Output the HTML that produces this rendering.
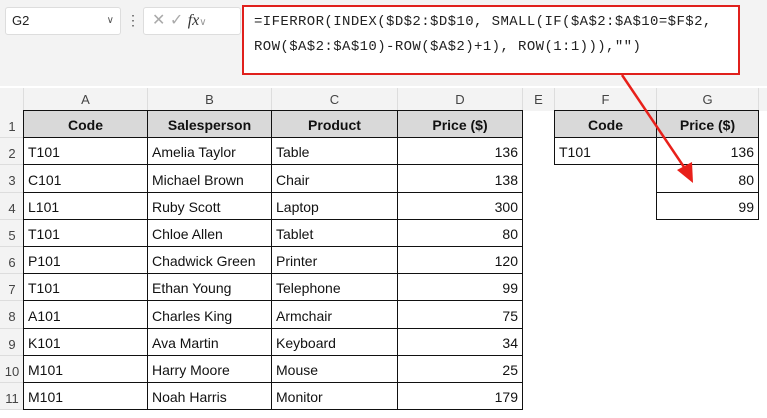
<!DOCTYPE html><html><head><style>
body{margin:0;width:767px;height:418px;overflow:hidden;background:#fff;font-family:"Liberation Sans",sans-serif;position:relative}
.top{position:absolute;left:0;top:0;width:767px;height:86px;background:#f3f3f3}
.nb{position:absolute;left:5px;top:7px;width:114px;height:26px;background:#fff;border:1px solid #ddd;border-radius:3px;font-size:13px;line-height:26px;text-indent:6px;color:#222}
.fx{position:absolute;left:143px;top:7px;width:96px;height:26px;background:#fff;border:1px solid #ddd;border-radius:3px;color:#aaa;font-size:16px;line-height:26px}
.fbox{position:absolute;left:242px;top:5px;border:2px solid #e0201c;background:#fff;font-family:"Liberation Mono",monospace;font-size:14px;line-height:25px;padding:3px 0 0 10px;box-sizing:border-box;width:498px;height:70px;color:#222;letter-spacing:0.4px;white-space:nowrap}
.ch{position:absolute;top:88px;height:23px;background:#f3f3f3;border-right:1px solid #ddd;box-sizing:border-box;text-align:center;font-size:13px;line-height:23px;color:#444}
.rh{position:absolute;left:0;width:24px;background:#f3f3f3;font-size:13px;color:#444;text-align:center;border-bottom:1px solid #ddd;box-sizing:border-box}
.c{position:absolute;box-sizing:border-box;border:1px solid #111;margin:-1px 0 0 -1px;font-size:14px;padding:0 4px;color:#111;white-space:nowrap}
.h{background:#d9d9d9;font-weight:bold;text-align:center}
.r{text-align:right}
</style></head><body>
<div class="top"></div>
<div class="nb">G2<span style="position:absolute;right:6px;color:#555;font-size:10px">&#8744;</span></div>
<div style="position:absolute;left:126px;top:12px;color:#555;font-size:14px">&#8942;</div>
<div class="fx"><span style="margin-left:8px">&#10005;</span> <span>&#10003;</span> <i style="font-family:'Liberation Serif',serif;color:#333">fx</i><span style="font-size:10px;color:#999">&#8744;</span></div>
<div class="fbox">=IFERROR(INDEX($D$2:$D$10, SMALL(IF($A$2:$A$10=$F$2,<br>ROW($A$2:$A$10)-ROW($A$2)+1), ROW(1:1))),"")</div>
<div id="g"></div>
<svg style="position:absolute;left:0;top:0" width="767" height="418"><line x1="622" y1="75" x2="686" y2="170" stroke="#e8201a" stroke-width="2.5"/><polygon points="693,183 677,170 692,162" fill="#e8201a"/></svg>
<script>
var xs=[24,148,272,398,523,555,657,759],L="ABCDEFG",h='';
for(var i=0;i<7;i++)h+='<div class="ch" style="left:'+xs[i]+'px;width:'+(xs[i+1]-xs[i])+'px">'+L[i]+'</div>';
h+='<div class="ch" style="left:0;width:24px"></div><div class="ch" style="left:759px;width:8px;border:0"></div>';
var t0=111,rh=27.2;
var d=[["Code","Salesperson","Product","Price ($)"],["T101","Amelia Taylor","Table",136],["C101","Michael Brown","Chair",138],["L101","Ruby Scott","Laptop",300],["T101","Chloe Allen","Tablet",80],["P101","Chadwick Green","Printer",120],["T101","Ethan Young","Telephone",99],["A101","Charles King","Armchair",75],["K101","Ava Martin","Keyboard",34],["M101","Harry Moore","Mouse",25],["M101","Noah Harris","Monitor",179]];
for(var r=0;r<11;r++){var y=Math.round(t0+r*rh),y2=Math.round(t0+(r+1)*rh),ht=y2-y;
h+='<div class="rh" style="top:'+y+'px;height:'+ht+'px;line-height:'+(ht+4)+'px">'+(r+1)+'</div>';
for(var c=0;c<4;c++){h+='<div class="c'+(r==0?' h':'')+(r>0&&c==3?' r':'')+'" style="left:'+xs[c]+'px;top:'+y+'px;width:'+(xs[c+1]-xs[c]+1)+'px;height:'+(ht+1)+'px;line-height:'+(ht+2)+'px">'+d[r][c]+'</div>';}
var f=null;if(r==0)f=[["Code",1],["Price ($)",1]];else if(r==1)f=[["T101",0],[136,0]];else if(r<4)f=[null,[r==2?80:99,0]];
if(f)for(var k=0;k<2;k++){if(!f[k])continue;var cc=5+k;h+='<div class="c'+(r==0?' h':'')+(r>0&&k==1?' r':'')+'" style="left:'+xs[cc]+'px;top:'+y+'px;width:'+(xs[cc+1]-xs[cc]+1)+'px;height:'+(ht+1)+'px;line-height:'+(ht+2)+'px">'+f[k][0]+'</div>';}
}
document.getElementById('g').innerHTML=h;
</script>
</body></html>
